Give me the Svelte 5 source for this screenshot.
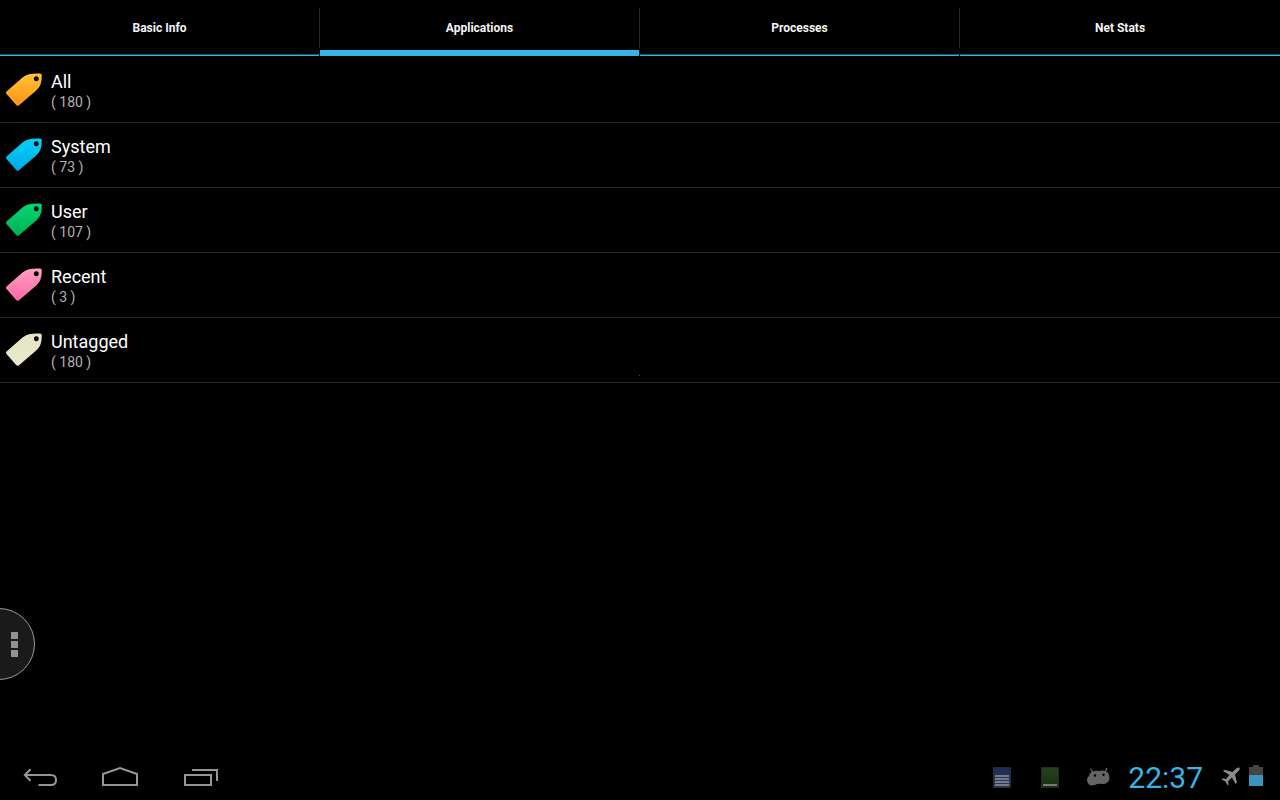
<script>
  const tabs = ['Basic Info', 'Applications', 'Processes', 'Net Stats'];
  let selected = $state(1);
  const tags = [
    { name: 'All', count: 180, from: '#ffc233', to: '#ff9318' },
    { name: 'System', count: 73, from: '#00d2fa', to: '#00a8e6' },
    { name: 'User', count: 107, from: '#00d873', to: '#00b050' },
    { name: 'Recent', count: 3, from: '#ffa0c0', to: '#ff68a4' },
    { name: 'Untagged', count: 180, from: '#e6e6c4', to: '#e8e8cc' }
  ];
</script>

<div class="screen">
  <nav class="tabs">
    {#each tabs as tab, i}
      <div class="cell">
        <button class="tab" class:selected={selected === i} onclick={() => (selected = i)}>{tab}</button>
        {#if i < tabs.length - 1}<span class="divider"></span>{/if}
      </div>
    {/each}
  </nav>

  <main>
    <ul class="list">
      {#each tags as tag, i}
        <li>
          <button class="row">
            <svg width="48" height="48" viewBox="0 0 48 48" aria-hidden="true">
              <defs>
                <linearGradient id="tag{i}" x1="0" y1="0" x2="0" y2="1">
                  <stop offset="0" stop-color={tag.from} />
                  <stop offset="1" stop-color={tag.to} />
                </linearGradient>
              </defs>
              <path
                fill="url(#tag{i})"
                fill-rule="evenodd"
                d="M6.5 25.6 L22.5 11.6 Q25.5 9 29 8.2 Q34 7.2 40 7.6 Q41.8 7.8 41.8 9.5 Q42 14 40.5 18.5 Q39.5 21.5 36.5 24.2 L19 39.2 Q17.5 40.4 16.2 39 L6.5 28 Q5.4 26.7 6.5 25.6 Z M36.3 10.3 a2.5 2.5 0 1 0 0.01 0 Z"
              />
            </svg>
            <span class="label">
              <span class="name">{tag.name}</span>
              <span class="count">( {tag.count} )</span>
            </span>
          </button>
        </li>
      {/each}
    </ul>
  </main>

  <span class="anchor"></span>
  <button class="handle" aria-label="Menu"><i></i><i></i><i></i></button>

  <footer class="system">
    <button class="nav" aria-label="Back">
      <svg width="80" height="46" viewBox="0 0 80 46" fill="none" stroke="#969696" stroke-width="2">
        <path d="M30.5 15.2 L24.8 21 L30.5 26.8 M25 21 H51 Q56 21 56 26 Q56 31 51 31 H38.5" />
      </svg>
    </button>
    <button class="nav" aria-label="Home">
      <svg width="80" height="46" viewBox="0 0 80 46" fill="none" stroke="#969696" stroke-width="2">
        <path d="M23 31 V20 L40 14 L57 20 V31 Z" />
      </svg>
    </button>
    <button class="nav" aria-label="Recent apps">
      <svg width="80" height="46" viewBox="0 0 80 46" fill="none" stroke="#969696" stroke-width="2">
        <path d="M25 21 H51 V31 H25 Z M32 16 H57 V27" />
      </svg>
    </button>

    <div class="status">
      <svg width="48" height="46" viewBox="0 0 48 46" aria-hidden="true">
        <defs><linearGradient id="blue" x1="0" y1="0" x2="0" y2="1"><stop stop-color="#1f2b50" /><stop offset="1" stop-color="#293a6a" /></linearGradient></defs>
        <rect x="15.5" y="13.5" width="17" height="20" fill="url(#blue)" stroke="#252a35" />
        <path d="M17 21h14v2h-14z M17 24h14v2h-14z M17 27h14v2h-14z M17 30h14v2h-14z" fill="#777a80" />
      </svg>
      <svg width="48" height="46" viewBox="0 0 48 46" aria-hidden="true">
        <defs><linearGradient id="green" x1="0" y1="0" x2="0" y2="1"><stop stop-color="#29401f" /><stop offset="1" stop-color="#182e12" /></linearGradient></defs>
        <rect x="15.5" y="13.5" width="17" height="20" fill="url(#green)" stroke="#252b24" />
        <path d="M17 30h14v2h-14z" fill="#777c74" />
      </svg>
      <svg width="48" height="46" viewBox="0 0 48 46" aria-hidden="true">
        <path d="M16.5 14.5 L19 18.5 M33 14 L31 18.5" stroke="#646464" stroke-width="1.4" />
        <path d="M17 18.5 Q20 16.2 24.5 17 Q30 15.8 33.5 18.2 Q36.5 22 34.8 27 Q32 31 26 29.8 Q23.500 29.500 21 31 Q15.500 32.500 13.500 28.500 Q12 24.500 15 22 Q15.300 19.800 17 18.500 Z" fill="#646464" />
        <circle cx="21" cy="21.500" r="1.200" fill="#000" /><circle cx="29.500" cy="20.800" r="1.200" fill="#000" />
      </svg>
      <time>22:37</time>
      <svg class="plane" width="20" height="46" viewBox="0 0 20 46" aria-hidden="true">
        <path d="M18.500 13.800 Q17 13 15 14.800 L11.500 18 L3.500 15.700 L2 17 L8.500 21 L5 25 L1.500 24.500 L0.500 25.500 L4.500 27.500 L6.500 31.500 L7.500 30.500 L7.200 27 L11 23.500 L14.500 30 L16 28.500 L14 20.500 L17.500 17 Q19.500 15 18.500 13.800 Z" fill="#8b8b8b" />
      </svg>
      <svg width="14" height="46" viewBox="0 0 14 46" aria-hidden="true">
        <path d="M4 11 H10 V13 H14 V21 H0 V13 H4 Z" fill="#444" />
        <path d="M0 21 H14 V32 H0 Z" fill="#3994bb" />
      </svg>
    </div>
  </footer>
</div>

<style>
  :global(body) {
    margin: 0;
    background: #000;
  }
  .screen {
    position: relative;
    display: flex;
    flex-direction: column;
    min-height: 100vh;
    background: #000;
    color: #fff;
    font-family: Roboto, sans-serif;
  }
  button {
    margin: 0;
    padding: 0;
    border: 0;
    background: none;
    color: inherit;
    font: inherit;
    cursor: pointer;
  }
  .tabs {
    display: grid;
    grid-template-columns: repeat(4, 1fr);
    height: 56px;
  }
  .cell {
    display: flex;
  }
  .tab {
    flex: 1;
    color: #f3f3f3;
    font-size: 12px;
    font-weight: 700;
    box-shadow: inset 0 -1px #33b5e5, inset 0 -2px #174f64;
  }
  .tab.selected {
    box-shadow: inset 0 -6px #33b5e5;
  }
  .divider {
    width: 1px;
    height: 40px;
    margin-top: 8px;
    background: #292929;
  }
  main {
    flex: 1;
  }
  .list {
    margin: 0;
    padding: 2px 0 0;
    list-style: none;
  }
  .row {
    display: flex;
    align-items: center;
    gap: 3px;
    width: 100%;
    height: 65px;
    border-bottom: 1px solid #292929;
    text-align: left;
  }
  .label {
    display: flex;
    flex-direction: column;
    padding-top: 4px;
  }
  .name {
    font-size: 18px;
    line-height: 21px;
  }
  .count {
    color: #b2b2b2;
    font-size: 14px;
    line-height: 21px;
  }
  .anchor {
    position: absolute;
    top: calc(50% - 25px);
    left: calc(50% - 1px);
    width: 1px;
    height: 1px;
    background: #444;
  }
  .handle {
    position: absolute;
    left: -37px;
    bottom: 120px;
    display: flex;
    flex-direction: column;
    align-items: flex-end;
    justify-content: center;
    gap: 2px;
    box-sizing: border-box;
    width: 72px;
    height: 72px;
    padding-right: 16px;
    border: 1px solid #999;
    border-radius: 50%;
    background: #1a1a1a;
  }
  .handle i {
    width: 7px;
    height: 7px;
    background: #929292;
  }
  .system {
    display: flex;
    height: 46px;
  }
  svg {
    display: block;
    flex: none;
  }
  .status {
    display: flex;
    align-items: center;
    margin-left: auto;
    padding-right: 17px;
  }
  time {
    margin-left: 6px;
    padding-top: 2px;
    color: #33b5e5;
    font-size: 30px;
    line-height: 46px;
  }
  .plane {
    margin: 0 8px 0 18px;
  }
</style>
